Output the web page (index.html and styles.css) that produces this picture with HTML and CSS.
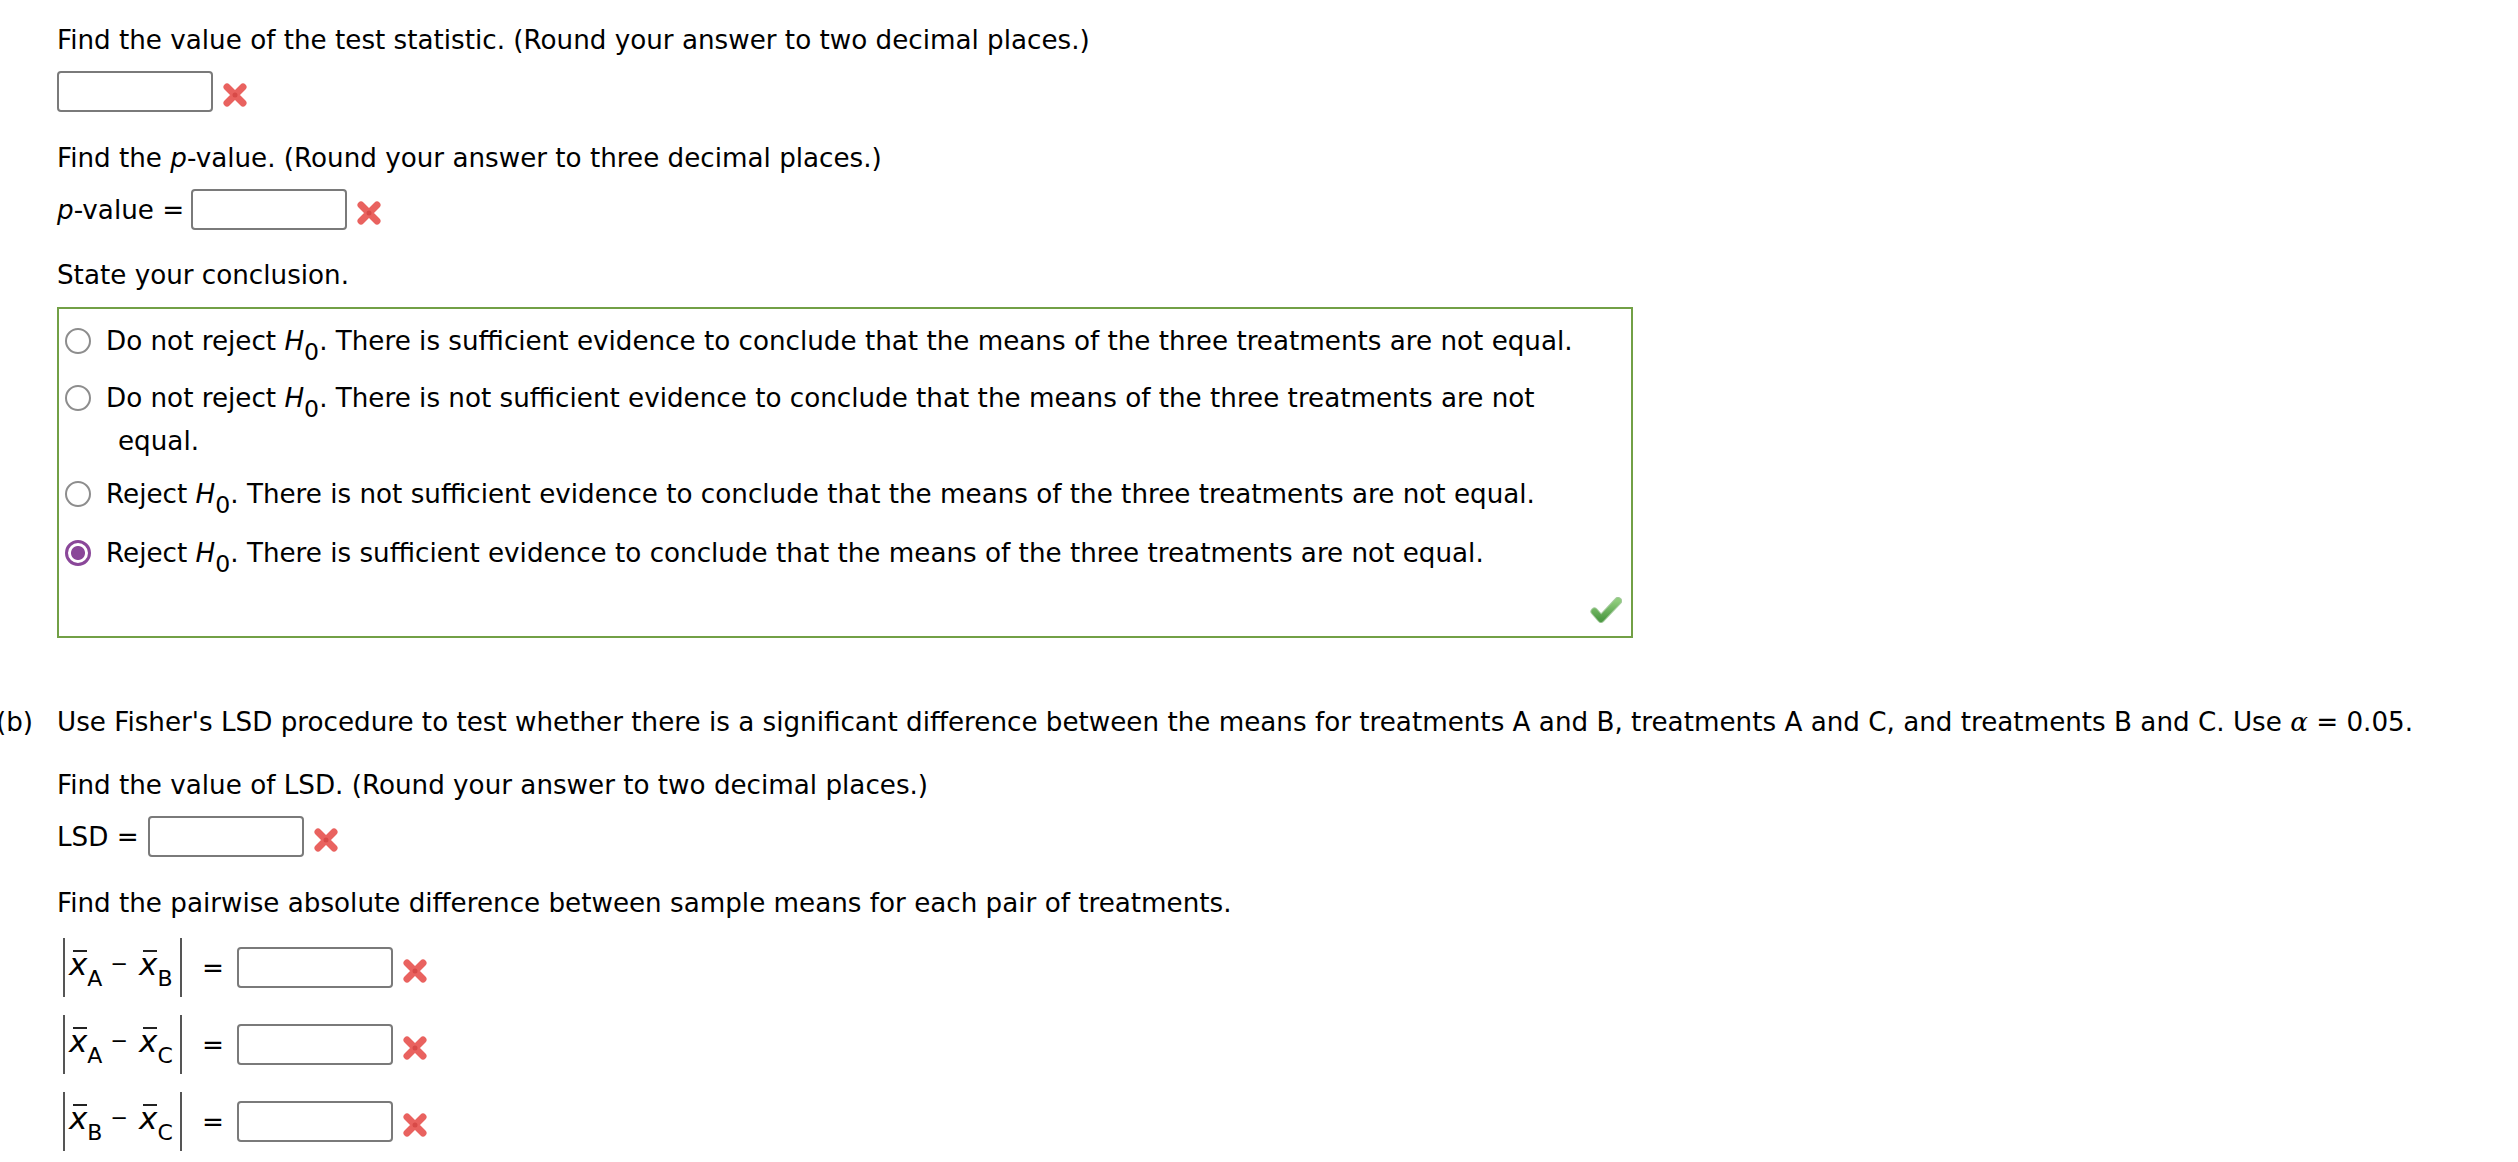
FILE: index.html
```html
<!DOCTYPE html>
<html lang="en">
<head>
<meta charset="utf-8">
<title>ANOVA question</title>
<link rel="stylesheet" href="styles.css">
</head>
<body>
<div class="page">
  <p class="txt q1">Find the value of the test statistic. (Round your answer to two decimal places.)</p>
  <div class="ans">
    <span class="box"></span>
    <svg class="xmark" viewBox="0 0 28 28"><path d="M6 6 L22 22 M22 6 L6 22" stroke="#e9625f" stroke-width="7" stroke-linecap="round"/><circle cx="14" cy="14" r="2.5" fill="#d84a48"/></svg>
  </div>

  <p class="txt q2">Find the <i>p</i>-value. (Round your answer to three decimal places.)</p>
  <div class="ans">
    <span class="lbl"><i>p</i>-value =</span>
    <span class="box"></span>
    <svg class="xmark" viewBox="0 0 28 28"><path d="M6 6 L22 22 M22 6 L6 22" stroke="#e9625f" stroke-width="7" stroke-linecap="round"/><circle cx="14" cy="14" r="2.5" fill="#d84a48"/></svg>
  </div>

  <p class="txt q3">State your conclusion.</p>
  <div class="choices">
    <div class="opt"><span class="radio"></span><span class="otext">Do not reject <i>H</i><sub>0</sub>. There is sufficient evidence to conclude that the means of the three treatments are not equal.</span></div>
    <div class="opt wrap"><span class="radio"></span><span class="otext">Do not reject <i>H</i><sub>0</sub>. There is not sufficient evidence to conclude that the means of the three treatments are not<br>equal.</span></div>
    <div class="opt third"><span class="radio"></span><span class="otext">Reject <i>H</i><sub>0</sub>. There is not sufficient evidence to conclude that the means of the three treatments are not equal.</span></div>
    <div class="opt"><span class="radio on"></span><span class="otext">Reject <i>H</i><sub>0</sub>. There is sufficient evidence to conclude that the means of the three treatments are not equal.</span></div>
    <svg class="check" viewBox="0 0 32 26">
      <defs><linearGradient id="cg" x1="0" y1="0" x2="0" y2="1"><stop offset="0" stop-color="#8fcc7c"/><stop offset="1" stop-color="#4e9b44"/></linearGradient></defs>
      <path d="M4.5 14.5 L11 22 L28 4" fill="none" stroke="#5a9c4c" stroke-width="8" stroke-linecap="round" stroke-linejoin="round" opacity="0.55"/>
      <path d="M4.5 14.5 L11 22 L28 4" fill="none" stroke="url(#cg)" stroke-width="6" stroke-linecap="round" stroke-linejoin="round"/>
    </svg>
  </div>

  <div class="partb">
    <span class="plabel">(b)</span>
    <span class="ptext">Use Fisher's LSD procedure to test whether there is a significant difference between the means for treatments A and B, treatments A and C, and treatments B and C. Use <i class="alpha">α</i> = 0.05.</span>
  </div>

  <p class="txt q4">Find the value of LSD. (Round your answer to two decimal places.)</p>
  <div class="ans">
    <span class="lbl lsd">LSD =</span>
    <span class="box"></span>
    <svg class="xmark" viewBox="0 0 28 28"><path d="M6 6 L22 22 M22 6 L6 22" stroke="#e9625f" stroke-width="7" stroke-linecap="round"/><circle cx="14" cy="14" r="2.5" fill="#d84a48"/></svg>
  </div>

  <p class="txt q5">Find the pairwise absolute difference between sample means for each pair of treatments.</p>

  <div class="mrow first">
    <span class="abs"><span class="expr"><span class="mx">x</span><sub>A</sub><span class="minus">−</span><span class="mx">x</span><sub>B</sub></span></span>
    <span class="eq">=</span>
    <span class="box"></span>
    <svg class="xmark" viewBox="0 0 28 28"><path d="M6 6 L22 22 M22 6 L6 22" stroke="#e9625f" stroke-width="7" stroke-linecap="round"/><circle cx="14" cy="14" r="2.5" fill="#d84a48"/></svg>
  </div>
  <div class="mrow">
    <span class="abs"><span class="expr"><span class="mx">x</span><sub>A</sub><span class="minus">−</span><span class="mx">x</span><sub>C</sub></span></span>
    <span class="eq">=</span>
    <span class="box"></span>
    <svg class="xmark" viewBox="0 0 28 28"><path d="M6 6 L22 22 M22 6 L6 22" stroke="#e9625f" stroke-width="7" stroke-linecap="round"/><circle cx="14" cy="14" r="2.5" fill="#d84a48"/></svg>
  </div>
  <div class="mrow">
    <span class="abs"><span class="expr"><span class="mx">x</span><sub>B</sub><span class="minus">−</span><span class="mx">x</span><sub>C</sub></span></span>
    <span class="eq">=</span>
    <span class="box"></span>
    <svg class="xmark" viewBox="0 0 28 28"><path d="M6 6 L22 22 M22 6 L6 22" stroke="#e9625f" stroke-width="7" stroke-linecap="round"/><circle cx="14" cy="14" r="2.5" fill="#d84a48"/></svg>
  </div>
</div>
</body>
</html>
```

FILE: styles.css
```css
html, body {
  margin: 0;
  padding: 0;
  background: #ffffff;
}

body {
  font-family: "DejaVu Sans", Verdana, sans-serif;
  font-size: 26.2px;
  color: #000000;
}

.page {
  padding-left: 57px;
  padding-top: 1px;
}

.txt {
  margin: 0;
  line-height: 38px;
}

.q1 { margin-top: 20px; }
.q2 { margin-top: 27px; }
.q3 { margin-top: 26px; }
.q4 { margin-top: 25px; }
.q5 { margin-top: 27px; }

.ans {
  display: flex;
  align-items: center;
  height: 41px;
  margin-top: 12px;
}

.box {
  flex: none;
  width: 156px;
  height: 41px;
  box-sizing: border-box;
  border: 2px solid #7a7a7a;
  border-radius: 4px;
  background: #ffffff;
}

.xmark {
  flex: none;
  width: 28px;
  height: 28px;
  margin-left: 8px;
  margin-top: 6px;
}

.lbl {
  margin-right: 7px;
  white-space: nowrap;
}

.lsd {
  margin-right: 9px;
}

/* choices */
.choices {
  position: relative;
  margin-top: 13px;
  width: 1576px;
  height: 331px;
  box-sizing: border-box;
  border: 2px solid #72a046;
  padding-top: 11px;
}

.opt {
  display: flex;
  align-items: flex-start;
  line-height: 43px;
  padding-left: 6px;
  margin-bottom: 14px;
}

.opt.wrap {
  margin-bottom: 10px;
}

.opt.third {
  margin-bottom: 16px;
}

.radio {
  flex: none;
  width: 26px;
  height: 26px;
  box-sizing: border-box;
  border: 2px solid #8d8d8d;
  border-radius: 50%;
  margin-top: 8px;
  margin-right: 15px;
  background: #ffffff;
}

.radio.on {
  border: 3px solid #8a4799;
  background: radial-gradient(circle, #8a4799 0 6.5px, #ffffff 7.5px);
}

.otext {
  padding-left: 12px;
  text-indent: -12px;
}

.otext sub {
  font-size: 0.9em;
  vertical-align: -10px;
  line-height: 0;
}

.check {
  position: absolute;
  right: 9px;
  bottom: 13px;
  width: 32px;
  height: 26px;
}

/* part b */
.partb {
  display: flex;
  margin-left: -61px;
  margin-top: 65px;
  line-height: 38px;
}

.plabel {
  flex: none;
  width: 61px;
}

.alpha {
  font-family: "DejaVu Serif", serif;
}

/* math rows */
.mrow {
  display: flex;
  align-items: center;
  height: 59px;
  margin-top: 18px;
}

.mrow.first {
  margin-top: 16px;
}

.abs {
  flex: none;
  display: flex;
  align-items: center;
  box-sizing: border-box;
  width: 119px;
  height: 59px;
  margin-left: 6px;
  padding: 0 0 0 4px;
  border-left: 2px solid #555555;
  border-right: 2px solid #555555;
}

.expr {
  white-space: nowrap;
  line-height: 1;
  font-size: 31px;
  padding-bottom: 6px;
}

.mx {
  position: relative;
  display: inline-block;
  font-style: italic;
}

.mx::before {
  content: "";
  position: absolute;
  left: 4px;
  right: 0;
  top: 1px;
  border-top: 2px solid #222222;
}

.expr sub {
  font-size: 22px;
  vertical-align: -11px;
  line-height: 0;
}

.minus {
  display: inline-block;
  margin: 0 11px 0 8px;
  font-size: 21px;
  vertical-align: 4px;
}

.eq {
  margin-left: 20px;
  margin-right: 13px;
}
```
